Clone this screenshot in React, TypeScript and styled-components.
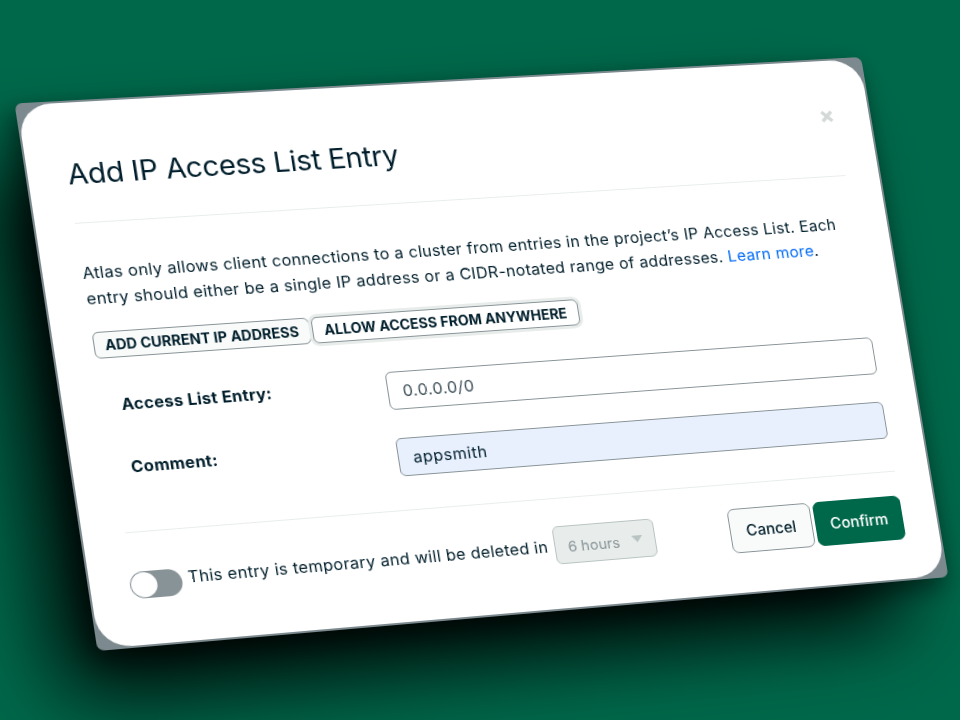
import React from 'react'
import styled, { createGlobalStyle } from 'styled-components'

const FLAT_W = 850
const FLAT_H = 552

// maps the flat modal rect on the four corners seen in the picture
const quadToMatrix = (w: number, h: number, p: number[][]) => {
  const [[x0, y0], [x1, y1], [x2, y2], [x3, y3]] = p
  const dx1 = x1 - x2
  const dx2 = x3 - x2
  const dx3 = x0 - x1 + x2 - x3
  const dy1 = y1 - y2
  const dy2 = y3 - y2
  const dy3 = y0 - y1 + y2 - y3
  const den = dx1 * dy2 - dx2 * dy1
  const g = (dx3 * dy2 - dx2 * dy3) / den
  const k = (dx1 * dy3 - dx3 * dy1) / den
  const a = (x1 - x0 + g * x1) / w
  const b = (x3 - x0 + k * x3) / h
  const d = (y1 - y0 + g * y1) / w
  const e = (y3 - y0 + k * y3) / h
  return `matrix3d(${a},${d},0,${g / w},${b},${e},0,${k / h},0,0,1,0,${x0},${y0},0,1)`
}

const TILT = quadToMatrix(FLAT_W, FLAT_H, [
  [14.5, 103.5],
  [861, 57],
  [948.5, 577],
  [97.5, 651],
])

const GlobalStyle = createGlobalStyle`
  html, body {
    margin: 0;
    padding: 0;
    background: #00684a;
  }
  * {
    box-sizing: border-box;
  }
`

const Stage = styled.div`
  position: relative;
  width: 960px;
  height: 720px;
  overflow: hidden;
  background: #00684a;
  font-family: Inter, "Liberation Sans", sans-serif;
  color: #001e2b;
`

const Backdrop = styled.div`
  position: absolute;
  left: 0;
  top: 0;
  width: ${FLAT_W}px;
  height: ${FLAT_H}px;
  padding: 2px;
  border-radius: 7px;
  background: #7c898e;
  box-shadow: -45px 52px 80px -10px #000, -6px 10px 26px rgba(0, 0, 0, 0.5);
  transform-origin: 0 0;
  transform: ${TILT};
`

const Modal = styled.div`
  position: relative;
  height: 100%;
  padding: 54px 35px 0 38px;
  border-radius: 32px;
  background: #fff;
`

const CloseIcon = styled.svg`
  position: absolute;
  top: 52px;
  right: 37px;
  width: 14px;
  height: 14px;
`

const Title = styled.h1`
  margin: 0;
  padding-bottom: 30px;
  border-bottom: 1px solid #e8edeb;
  font-size: 28.6px;
  line-height: 38px;
  font-weight: 400;
  letter-spacing: -0.3px;
`

const Intro = styled.p`
  margin: 37px 0 0;
  font-size: 16px;
  line-height: 26px;
  letter-spacing: 0.3px;
`

const Link = styled.a`
  color: #016bf8;
`

const QuickRow = styled.div`
  display: flex;
  gap: 2px;
  margin-top: 21px;
`

const QuickButton = styled.button<{ $focused?: boolean }>`
  height: 27px;
  padding: 0 ${({ $focused }) => ($focused ? '11px' : '10px')};
  border: 1px solid #889397;
  border-radius: 6px;
  background: ${({ $focused }) => ($focused ? '#fff' : '#f9fbfa')};
  box-shadow: ${({ $focused }) => ($focused ? '0 0 0 3px #e8edeb' : 'none')};
  font: 700 14px Inter, sans-serif;
  color: #001e2b;
`

const Form = styled.div`
  display: flex;
  flex-direction: column;
  gap: 29px;
  margin-top: 34px;
`

const FormRow = styled.div`
  display: grid;
  grid-template-columns: 258px 496px;
  align-items: start;
  padding-left: 18px;
`

const Label = styled.label<{ $drop: number }>`
  margin-top: ${({ $drop }) => $drop}px;
  font-size: 16px;
  font-weight: 700;
  letter-spacing: 0.25px;
`

const Field = styled.input<{ $filled?: boolean }>`
  height: 39px;
  padding: 0 14px;
  border: 1px solid #889397;
  border-radius: 6px;
  background: ${({ $filled }) => ($filled ? '#e8f0fe' : '#fff')};
  font: 400 16px Inter, sans-serif;
  letter-spacing: ${({ $filled }) => ($filled ? '0.5px' : '0.4px')};
  color: ${({ $filled }) => ($filled ? '#001e2b' : '#3d4f58')};
`

const Footer = styled.div`
  display: flex;
  align-items: center;
  justify-content: space-between;
  margin: 34px 0 0 3px;
  padding-top: 25px;
  border-top: 1px solid #e8edeb;
`

const TempGroup = styled.div`
  display: flex;
  align-items: center;
  gap: 6px;
  margin: -1px 0 0 -3px;
  font-size: 16px;
  letter-spacing: 0.3px;
`

const Switch = styled.span`
  position: relative;
  width: 50px;
  height: 27px;
  margin-top: 10px;
  border-radius: 14px;
  background: #889397;
`

const Knob = styled.span`
  position: absolute;
  top: 1px;
  left: 1px;
  width: 25px;
  height: 25px;
  border-radius: 50%;
  background: #fff;
`

const HoursSelect = styled.div`
  display: flex;
  align-items: flex-start;
  justify-content: space-between;
  width: 102px;
  height: 39px;
  padding: 12px 12px 0 13px;
  border: 1px solid #b8c4c2;
  border-radius: 6px;
  background: #e8edeb;
  font-size: 14.5px;
  letter-spacing: 0;
  color: #889397;
`

const Caret = styled.svg`
  width: 11px;
  height: 7px;
  margin-top: 3px;
`

const Actions = styled.div`
  display: flex;
  gap: 3px;
`

const ActionButton = styled.button<{ $primary?: boolean }>`
  height: 46px;
  width: ${({ $primary }) => ($primary ? '91px' : '85px')};
  border: 1px solid ${({ $primary }) => ($primary ? '#00684a' : '#889397')};
  border-radius: 7px;
  background: ${({ $primary }) => ($primary ? '#00684a' : '#f9fbfa')};
  color: ${({ $primary }) => ($primary ? '#fff' : '#001e2b')};
  font: 500 15.5px Inter, sans-serif;
`

export default function App() {
  return (
    <Stage>
      <GlobalStyle />
      <Backdrop>
        <Modal>
          <CloseIcon viewBox="0 0 14 14">
            <path d="M2 2 L12 12 M12 2 L2 12" stroke="#d4d9d8" strokeWidth="3.6" />
          </CloseIcon>
          <Title>Add IP Access List Entry</Title>
          <Intro>
            Atlas only allows client connections to a cluster from entries in the project’s IP Access List. Each
            entry should either be a single IP address or a CIDR-notated range of addresses.{' '}
            <Link>Learn more</Link>.
          </Intro>
          <QuickRow>
            <QuickButton>ADD CURRENT IP ADDRESS</QuickButton>
            <QuickButton $focused>ALLOW ACCESS FROM ANYWHERE</QuickButton>
          </QuickRow>
          <Form>
            <FormRow>
              <Label $drop={3}>Access List Entry:</Label>
              <Field defaultValue="0.0.0.0/0" />
            </FormRow>
            <FormRow>
              <Label $drop={-2}>Comment:</Label>
              <Field $filled defaultValue="appsmith" />
            </FormRow>
          </Form>
          <Footer>
            <TempGroup>
              <Switch>
                <Knob />
              </Switch>
              This entry is temporary and will be deleted in
              <HoursSelect>
                6 hours
                <Caret viewBox="0 0 11 7">
                  <path d="M0 0 H11 L5.5 7 Z" fill="#b8c4c2" />
                </Caret>
              </HoursSelect>
            </TempGroup>
            <Actions>
              <ActionButton>Cancel</ActionButton>
              <ActionButton $primary>Confirm</ActionButton>
            </Actions>
          </Footer>
        </Modal>
      </Backdrop>
    </Stage>
  )
}
